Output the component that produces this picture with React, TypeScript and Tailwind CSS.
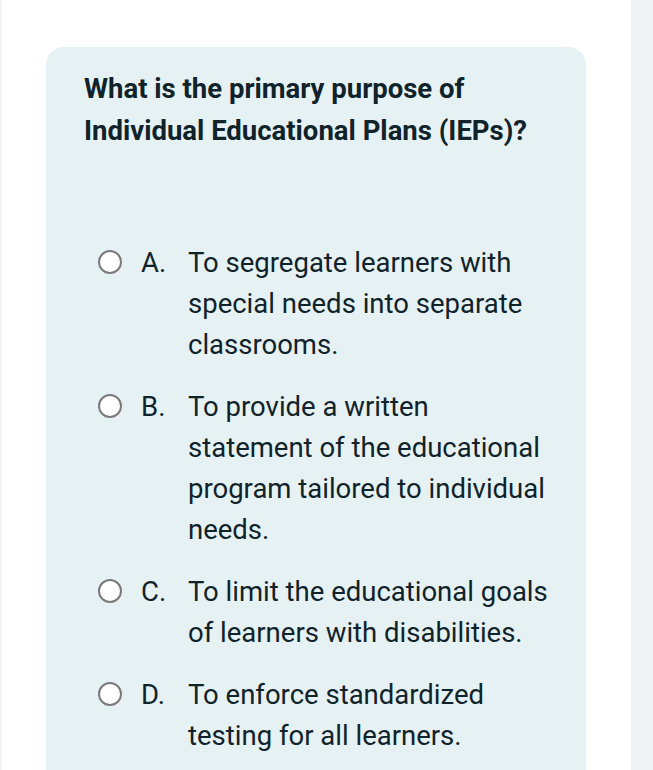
const options = [
  { letter: "A.", text: "To segregate learners with special needs into separate classrooms." },
  { letter: "B.", text: "To provide a written statement of the educational program tailored to individual needs." },
  { letter: "C.", text: "To limit the educational goals of learners with disabilities." },
  { letter: "D.", text: "To enforce standardized testing for all learners." },
];

export default function App() {
  return (
    <div
      className="flex h-[770px] w-[653px] overflow-hidden bg-white text-[#10232a]"
      style={{ fontFamily: "Roboto, 'Noto Sans', sans-serif" }}
    >
      <div className="w-[2px] bg-[#f1f2f4]" />
      <div className="flex-1 pl-[44px] pr-[45px] pt-[47px]">
        <div className="h-full rounded-t-[18px] bg-[#e6f1f4] pl-[38px] pr-[38px] pt-[21px]">
          <h1 className="text-[27.5px] font-bold leading-[42px]">
            What is the primary purpose of Individual Educational Plans (IEPs)?
          </h1>
          <div className="mt-[90px] flex flex-col gap-[21px]">
            {options.map((o) => (
              <div key={o.letter} className="flex items-start">
                <div className="mt-[8px] ml-[14px] h-[24px] w-[24px] shrink-0 rounded-full border-2 border-[#7a7a7a] bg-white" />
                <div className="ml-[19px] w-[47px] shrink-0 text-[27.5px] leading-[41px]">{o.letter}</div>
                <div className="text-[27.5px] leading-[41px]">{o.text}</div>
              </div>
            ))}
          </div>
        </div>
      </div>
      <div className="w-[22px] bg-[#f2f3f7]" />
    </div>
  );
}
